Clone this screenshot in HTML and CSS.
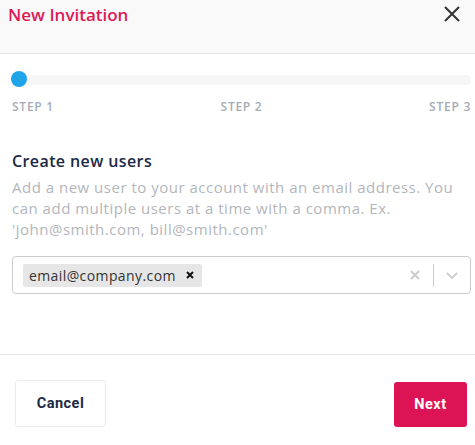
FILE: index.html
```html
<!DOCTYPE html>
<html>
<head>
<meta charset="utf-8">
<link rel="stylesheet" href="styles.css">
</head>
<body>
<div class="modal">
  <header class="head">
    <h1 class="title">New Invitation</h1>
    <button class="close" aria-label="Close">
      <svg width="18" height="18" viewBox="0 0 18 18"><path d="M2 2L16 16M16 2L2 16" stroke="#333" stroke-width="2" fill="none"/></svg>
    </button>
  </header>
  <section class="body">
    <div class="progress">
      <div class="track"></div>
      <div class="dot"></div>
    </div>
    <div class="steps">
      <span>STEP 1</span><span>STEP 2</span><span>STEP 3</span>
    </div>
    <h2 class="subtitle">Create new users</h2>
    <p class="desc">Add a new user to your account with an email address. You can add multiple users at a time with a comma. Ex. 'john@smith.com, bill@smith.com'</p>
    <div class="select">
      <div class="values">
        <span class="tag"><span class="tag-label">email@company.com</span><span class="tag-x">
          <svg width="8" height="8" viewBox="0 0 8 8"><path d="M1 1L7 7M7 1L1 7" stroke="#111" stroke-width="2" fill="none"/></svg>
        </span></span>
      </div>
      <div class="indicators">
        <span class="ind">
          <svg width="12" height="12" viewBox="0 0 12 12"><path d="M2 2L10 10M10 2L2 10" stroke="#ccc" stroke-width="2" fill="none"/></svg>
        </span>
        <span class="sep"></span>
        <span class="ind">
          <svg width="14" height="10" viewBox="0 0 14 10"><path d="M2 3L7 8L12 3" stroke="#ccc" stroke-width="1.8" fill="none"/></svg>
        </span>
      </div>
    </div>
  </section>
  <footer class="foot">
    <button class="btn cancel">Cancel</button>
    <button class="btn next">Next</button>
  </footer>
</div>
</body>
</html>
```
FILE: styles.css
```css
* { box-sizing: border-box; }
html, body { margin: 0; padding: 0; background: #fff; }
body { font-family: "Open Sans", "Liberation Sans", sans-serif; width: 475px; height: 445px; overflow: hidden; }
.modal { display: flex; flex-direction: column; height: 445px; }
.head {
  height: 54px;
  background: #f9f9f9;
  border-bottom: 1px solid #e4e4e4;
  display: flex;
  justify-content: space-between;
  align-items: flex-start;
  padding: 3px 14px 0 8px;
}
.title {
  margin: 0;
  font-size: 17px;
  font-weight: 600;
  color: #dc1a56;
  line-height: 24px;
}
.close { border: 0; background: none; padding: 2px 0 0; margin: 0; cursor: pointer; line-height: 0; }
.body { padding: 17px 4px 0 12px; flex: 1; }
.progress { position: relative; height: 16px; }
.track { position: absolute; left: 8px; right: 0; top: 4px; height: 10px; background: #f6f6f6; border-radius: 5px; }
.dot { position: absolute; left: -1px; top: 0; width: 16px; height: 16px; border-radius: 50%; background: #1fa3e9; }
.steps {
  display: flex;
  justify-content: space-between;
  margin-top: 12px;
  font-size: 12px;
  font-weight: 600;
  color: #a7acb6;
  letter-spacing: 0.75px;
  line-height: 16px;
}
.subtitle {
  margin: 35px 0 0;
  font-size: 16px;
  font-weight: 600;
  color: #1c2945;
  line-height: 22px;
  letter-spacing: 0.4px;
}
.desc {
  margin: 5px 0 0;
  font-size: 15px;
  line-height: 21px;
  color: #b3b6bc;
  letter-spacing: 0.5px;
}
.select {
  margin-top: 16px;
  height: 38px;
  border: 1px solid #cccccc;
  border-radius: 4px;
  display: flex;
  align-items: center;
  justify-content: space-between;
  padding: 0 0 0 10px;
}
.tag {
  display: inline-flex;
  align-items: center;
  background: #e6e6e6;
  border-radius: 2px;
  height: 23px;
  padding: 0 8px 0 6px;
}
.tag-label { font-size: 14px; color: #333; letter-spacing: 0.4px; }
.tag-x { margin-left: 10px; line-height: 0; }
.indicators { display: flex; align-items: center; height: 100%; }
.ind { display: flex; align-items: center; justify-content: center; width: 36px; line-height: 0; }
.sep { width: 1px; height: 23px; background: #cccccc; }
.foot {
  border-top: 1px solid #e6e6e6;
  height: 91px;
  display: flex;
  justify-content: space-between;
  align-items: center;
  padding: 8px 8px 0 15px;
}
.btn {
  font-family: Roboto, "Liberation Sans", sans-serif;
  font-weight: 700;
  font-size: 14.5px;
  letter-spacing: 0.5px;
  border-radius: 3px;
  cursor: pointer;
}
.cancel { width: 91px; height: 47px; background: #fff; border: 1px solid #ececec; color: #1c2945; margin-top: -2px; }
.next { width: 73px; height: 45px; background: #dc1456; border: 0; color: #fff; }
```
